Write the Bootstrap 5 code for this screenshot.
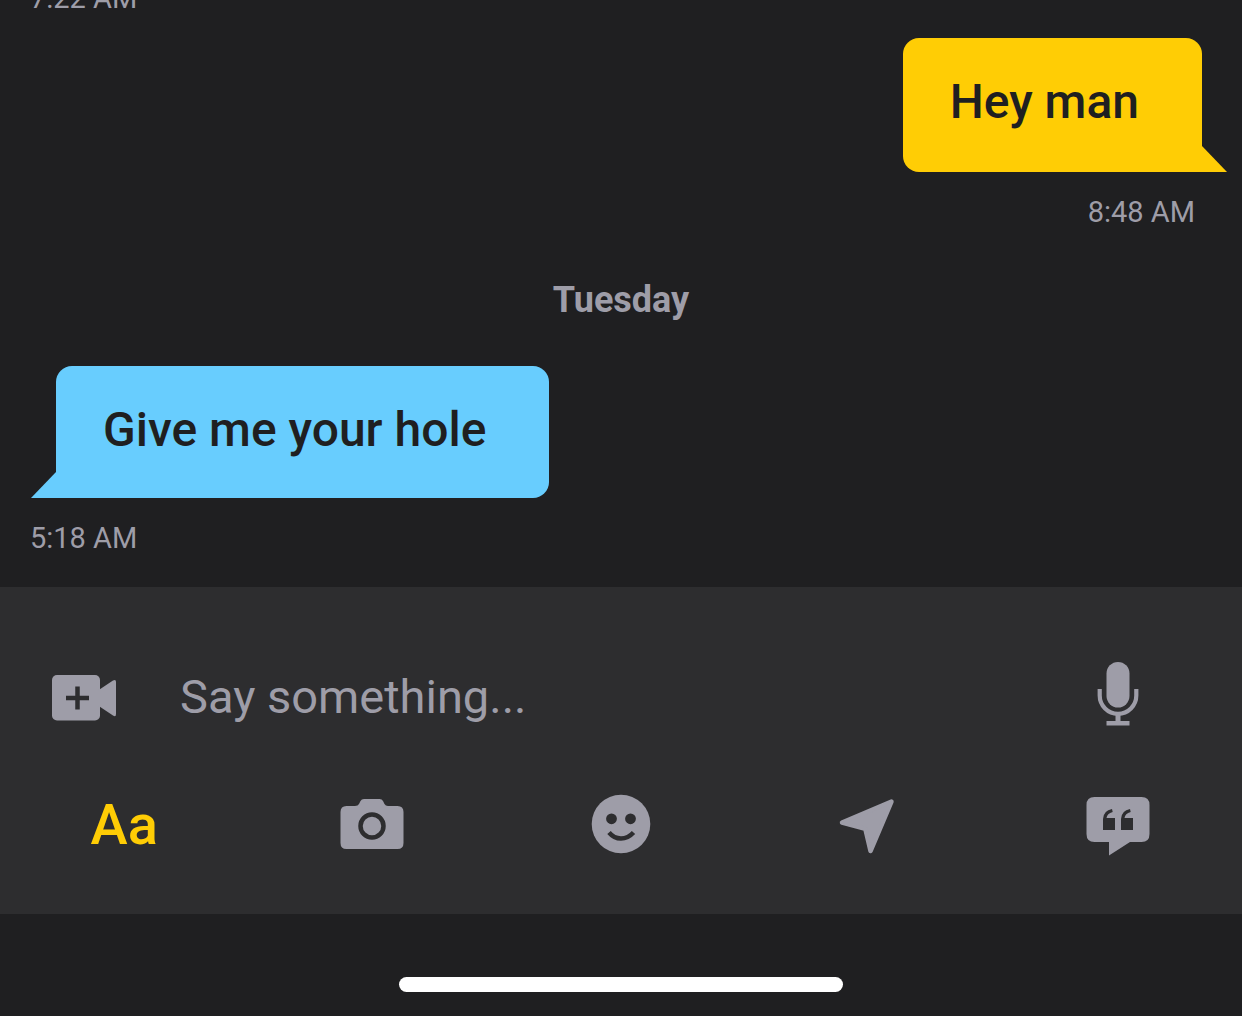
<!DOCTYPE html>
<html lang="en" data-bs-theme="dark">
<head>
<meta charset="utf-8">
<meta name="viewport" content="width=device-width, initial-scale=1">
<title>Chat</title>
<link href="https://cdn.jsdelivr.net/npm/bootstrap@5.3.0/dist/css/bootstrap.min.css" rel="stylesheet">
<style>
  :root { --ink: #1f1f21; --panel: #2d2d2f; --muted: #9e9da8; --sent: #ffcd05; --received: #68cdfe; }
  body { background: var(--ink); color: var(--muted); font-family: Roboto, "Liberation Sans", sans-serif; }
  .chat-log { min-height: 0; padding-bottom: 31px; }
  .bubble { position: relative; color: var(--ink); font-size: 48px; line-height: 56px; font-weight: 500; padding: 36px 63px 40px 47px; border-radius: 16px; }
  .bubble::after { content: ""; position: absolute; bottom: 0; width: 25px; height: 26px; background: inherit; }
  .bubble-in { background: var(--received); margin-left: 56px; border-bottom-left-radius: 0; }
  .bubble-in::after { right: 100%; clip-path: polygon(100% 0, 100% 100%, 0 100%); }
  .bubble-out { background: var(--sent); margin-right: 40px; padding-bottom: 42px; border-bottom-right-radius: 0; }
  .bubble-out::after { left: 100%; clip-path: polygon(0 0, 100% 100%, 0 100%); }
  .stamp { font-size: 29px; line-height: 36px; font-weight: 400; margin: 22px 47px 0 30px; }
  .stamp + .bubble { margin-top: 22px; }
  .day-label { color: var(--muted); font-size: 36px; line-height: 44px; font-weight: 700; margin: 48px 0 44px; }
  .composer { background: var(--panel); padding: 70px 0 49px; }
  .composer svg { display: block; width: 80px; height: 80px; fill: currentColor; }
  .composer .btn { --bs-btn-padding-x: 0; --bs-btn-padding-y: 0; --bs-btn-border-width: 0; --bs-btn-color: var(--muted); --bs-btn-hover-color: #c4c3cc; }
  .entry-row { padding: 0 84px 0 44px; }
  .message-box, .message-box:focus { background: transparent; border: 0; box-shadow: none; color: #ffffff; font-size: 47px; line-height: 56px; font-weight: 400; padding: 10px 0; margin-left: 56px; min-width: 0; }
  .message-box::placeholder { color: var(--muted); opacity: 1; }
  .tool-row { margin-top: 48px; }
  .composer .btn-type { color: var(--sent); font-size: 56px; line-height: 80px; font-weight: 500; }
  .cut { fill: var(--panel); }
  .cut-line { fill: none; stroke: var(--panel); stroke-width: 4.5; }
  .home-area { height: 102px; padding-bottom: 24px; }
  .home-bar { width: 444px; max-width: 60%; height: 15px; background: #ffffff; }
</style>
</head>
<body class="d-flex flex-column vh-100 overflow-hidden">
<main class="chat-log d-flex flex-column justify-content-end flex-grow-1 overflow-hidden">
  <time class="stamp align-self-start">7:22 AM</time>
  <div class="bubble bubble-out align-self-end">Hey man</div>
  <time class="stamp align-self-end">8:48 AM</time>
  <h2 class="day-label text-center">Tuesday</h2>
  <div class="bubble bubble-in align-self-start">Give me your hole</div>
  <time class="stamp align-self-start">5:18 AM</time>
</main>

<form class="composer flex-shrink-0" onsubmit="return false">
  <div class="entry-row d-flex align-items-center">
    <button type="button" class="btn flex-shrink-0" aria-label="Video call">
      <svg viewBox="0 0 80 80" aria-hidden="true">
        <rect x="8" y="18" width="48" height="45.5" rx="5"/>
        <path d="M54 33.500L69 23.500Q72 21.800 72 25V57Q72 60.500 69 58.500L54 48.500Z"/>
        <path class="cut-line" d="M22 41H45M33.500 29.500V52.500"/>
      </svg>
    </button>
    <input type="text" class="message-box form-control flex-grow-1" placeholder="Say something..." aria-label="Message">
    <button type="button" class="btn flex-shrink-0" aria-label="Record voice">
      <svg viewBox="0 0 80 80" aria-hidden="true">
        <rect x="28.500" y="5" width="23" height="45.500" rx="11.500"/>
        <path d="M21.700 32V38.500A18.300 18.300 0 0 0 58.300 38.500V32" fill="none" stroke="currentColor" stroke-width="4.200"/>
        <path d="M37.500 56H42.500V64H51.500V68.500H28.500V64H37.500Z"/>
      </svg>
    </button>
  </div>
  <div class="tool-row row g-0 row-cols-5">
    <div class="col d-flex justify-content-center">
      <button type="button" class="btn btn-type" aria-label="Text">Aa</button>
    </div>
    <div class="col d-flex justify-content-center">
      <button type="button" class="btn" aria-label="Photo">
        <svg viewBox="0 0 80 80" aria-hidden="true">
          <path d="M13.500 21H22Q25 21 26 19L27.500 16Q28.500 14 31 14H46.500Q49 14 50 16L51.500 19Q52.500 21 55 21H64.500Q70.500 21 70.500 27V58Q70.500 64 64.500 64H13.500Q7.500 64 7.500 58V27Q7.500 21 13.500 21Z"/>
          <circle class="cut-line" cx="39" cy="41" r="11.500"/>
        </svg>
      </button>
    </div>
    <div class="col d-flex justify-content-center">
      <button type="button" class="btn" aria-label="Stickers">
        <svg viewBox="0 0 80 80" aria-hidden="true">
          <circle cx="40" cy="39" r="29.300"/>
          <circle class="cut" cx="30.500" cy="33.800" r="5.400"/>
          <circle class="cut" cx="49.500" cy="33.800" r="5.400"/>
          <path class="cut-line" d="M28 47.500Q33 53.500 40 53.500T52.500 47.500"/>
        </svg>
      </button>
    </div>
    <div class="col d-flex justify-content-center">
      <button type="button" class="btn" aria-label="Location">
        <svg viewBox="0 0 80 80" aria-hidden="true">
          <path d="M62.500 16.500L13 37.500L36.300 43.800L41.500 66Z" stroke="currentColor" stroke-width="4.500" stroke-linejoin="round"/>
        </svg>
      </button>
    </div>
    <div class="col d-flex justify-content-center">
      <button type="button" class="btn" aria-label="Saved phrases">
        <svg viewBox="0 0 80 80" aria-hidden="true">
          <path d="M16.500 12H63.500Q71.500 12 71.500 20V49Q71.500 57 63.500 57H52L31 70.500V57H16.500Q8.500 57 8.500 49V20Q8.500 12 16.500 12Z"/>
          <path class="cut" d="M25 45V34Q25.500 25.500 34 24L34.700 27Q29 28.500 28.500 33H37V45Z"/>
          <path class="cut" d="M43 45V34Q43.500 25.500 52 24L52.700 27Q47 28.500 46.500 33H55V45Z"/>
        </svg>
      </button>
    </div>
  </div>
</form>

<footer class="home-area d-flex align-items-end justify-content-center flex-shrink-0">
  <div class="home-bar rounded-pill"></div>
</footer>
<script src="https://cdn.jsdelivr.net/npm/bootstrap@5.3.0/dist/js/bootstrap.bundle.min.js"></script>
</body>
</html>
